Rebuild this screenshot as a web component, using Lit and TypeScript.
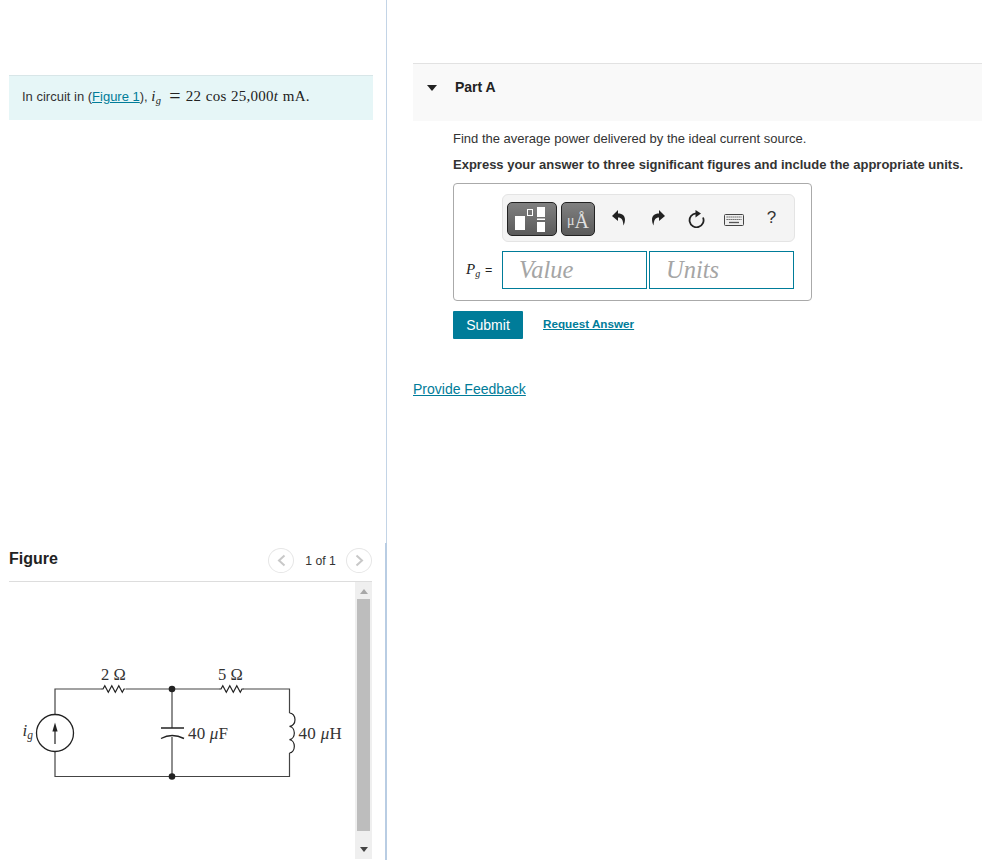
import { LitElement, html, css, svg } from "lit";
import { customElement } from "lit/decorators.js";

const zig = (x: number, y: number) =>
  `M${x} ${y}l2 0l1.800 -3.200l3.500 6.400l3.500 -6.400l3.500 6.400l3.500 -6.400l3.500 6.400l1.700 -3.200l1.500 0`;

@customElement("app-root")
export class AppRoot extends LitElement {
  static styles = css`
    :host { display: block; width: 982px; height: 860px; overflow: hidden; background: #fff;
      font-family: "Liberation Sans", Arial, sans-serif; color: #333; font-size: 13px; }
    .page { display: flex; height: 860px; }
    .left { width: 386px; flex: none; display: flex; flex-direction: column; padding-left: 9px; box-sizing: border-box; }
    .prompt { margin-top: 75px; width: 364px; height: 45px; box-sizing: border-box; background: #e6f6f7;
      border-top: 1px solid #d8e6e8; padding: 0 0 4px 13px; display: flex; align-items: center; font-size: 13px; color: #333; white-space: nowrap; }
    a { color: #007c99; text-decoration: underline; }
    .math { font-family: "Liberation Serif", serif; font-size: 15px; color: #222; letter-spacing: 0.25px; word-spacing: 0.5px; }
    .math i { font-style: italic; }
    .math sub { font-size: 10.5px; line-height: 0; vertical-align: -3px; font-style: italic; }
    .math .eq { margin: 0 5px 0 8px; font-size: 20px; line-height: 0; position: relative; top: 2px; }
    .figure { margin-top: 420px; width: 363px; flex: 1; display: flex; flex-direction: column; min-height: 0; }
    .fighead { height: 42px; flex: none; display: flex; align-items: center; border-bottom: 1px solid #ddd; box-sizing: border-box; }
    .fighead h3 { margin: 0; font-size: 16px; font-weight: bold; color: #222; flex: 1; position: relative; top: -2px; }
    .pager { display: flex; align-items: center; font-size: 12.2px; color: #333; }
    .circ { width: 26px; height: 25px; border-radius: 50%; border: 1px solid #e6e6e6; box-sizing: border-box; display: flex; align-items: center; justify-content: center; }
    .count { width: 52px; text-align: center; white-space: nowrap; padding-left: 1px; box-sizing: border-box; }
    .figbody { flex: 1; display: flex; min-height: 0; }
    .canvas { width: 346px; flex: none; }
    .canvas svg { display: block; }
    .sb { width: 17px; flex: none; background: #efefef; display: flex; flex-direction: column; align-items: center; margin-bottom: 1px; }
    .sb .btn { flex: none; display: flex; justify-content: center; width: 100%; box-sizing: border-box; }
    .sb .btn svg { display: block; }
    .sb .up { height: 17px; padding-top: 7px; }
    .sb .down { height: 28px; padding-top: 16px; }
    .sb .thumb { flex: 1; width: 13px; background: #bdbdbd; }
    .divider { width: 2px; flex: none; display: flex; flex-direction: column; }
    .d1 { height: 543px; width: 1px; background: #c3d4e6; }
    .d2 { flex: 1; width: 2px; background: #b9cde3; margin-left: -1px; }
    .right { flex: 1; padding-left: 25px; padding-top: 63px; min-width: 0; }
    .parthead { height: 58px; background: #f9f9f9; border-top: 1px solid #e2e2e2; box-sizing: border-box; display: flex; padding-left: 14px; padding-top: 15px; }
    .tri { width: 0; height: 0; border-left: 5.5px solid transparent; border-right: 5.5px solid transparent; border-top: 6px solid #222; margin-top: 6px; }
    .parthead b { margin-left: 18px; font-size: 14px; color: #222; line-height: 16px; }
    .body { padding-left: 40px; }
    .q { margin: 10px 0 0; font-size: 13px; line-height: 16px; color: #333; }
    .ins { margin: 10px 0 0; font-size: 13px; line-height: 16px; font-weight: bold; color: #333; white-space: nowrap; }
    .answer { margin-top: 10px; width: 359px; height: 118px; box-sizing: border-box; border: 1px solid #aaa; border-radius: 4px; padding: 10px 17px 0 12px; }
    .toolbar { margin-left: 36px; height: 48px; width: 293px; box-sizing: border-box; background: #f4f4f4; border: 1px solid #e4e4e4; border-radius: 6px; display: flex; align-items: center; padding-left: 4px; }
    .tb { height: 34px; flex: none; box-sizing: border-box; border: 1px solid #222; border-radius: 5px; background: linear-gradient(#808080, #5a5a5a); display: flex; align-items: center; justify-content: center; position: relative; top: 1px; }
    .tb.t1 { width: 50px; }
    .tb.t2 { width: 34px; margin-left: 4px; color: #e0e0e0; font-family: "Liberation Serif", serif; font-size: 14px; padding-top: 3px; }
    .tb.t2 span { font-size: 20px; line-height: 0; }
    .ic { display: flex; align-items: center; justify-content: center; flex: none; height: 34px; }
    .i-undo { width: 48px; }
    .i-redo { width: 30px; }
    .i-reload { width: 46px; }
    .i-keys { width: 30px; }
    .i-help { width: 45px; font-size: 17px; color: #333; }
    .i-reload svg { position: relative; top: 1px; }
    .i-keys svg { position: relative; top: 2px; }
    .row { display: flex; align-items: center; margin-top: 9px; }
    .lbl { width: 36px; flex: none; font-family: "Liberation Serif", serif; font-size: 15px; white-space: nowrap; color: #222; box-sizing: border-box; padding-bottom: 1px; }
    .lbl i { font-style: italic; }
    .lbl sub { font-size: 10px; line-height: 0; vertical-align: -3px; font-style: italic; }
    .lbl span { font-family: "Liberation Sans", sans-serif; font-size: 12.5px; margin-left: 1px; }
    .field { width: 145px; height: 38px; box-sizing: border-box; border: 1px solid #007c99; display: flex; align-items: center; padding-left: 16px; font-family: "Liberation Serif", serif; font-style: italic; font-size: 24.500px; color: #a5a5a5; }
    .field + .field { margin-left: 2px; }
    .actions { display: flex; align-items: center; margin-top: 10px; }
    .submit { width: 70px; height: 28px; background: #007c99; color: #fff; font-size: 14px; display: flex; align-items: center; justify-content: center; border-radius: 1px; }
    .req { margin-left: 20px; font-size: 11.7px; font-weight: bold; position: relative; top: -2px; }
    .fb { display: inline-block; margin-top: 42px; font-size: 14px; line-height: 16px; }
  `;

  private circuit() {
    return svg`<svg width="346" height="278" viewBox="9 582 346 278" xmlns="http://www.w3.org/2000/svg">
      <g fill="none" stroke="#444" stroke-width="1.2">
        <path d="M55 714.500V689H101M126 689H219M243 689H289.500V713M289.500 753V776.500H55V751.500"/>
        <path d="${zig(101, 689)}" stroke="#222"/>
        <path d="${zig(219, 689)}" stroke="#222"/>
        <circle cx="55" cy="733" r="18.500" stroke="#222" stroke-width="1.300"/>
        <path d="M55 744V727" stroke="#222"/>
        <path d="M172 689V728M172 737V776.500"/>
        <path d="M161 728H184" stroke-width="1.500" stroke="#222"/>
        <path d="M161 738.500Q172 732.500 184 738.500" stroke-width="1.400" stroke="#222"/>
        <path d="M289.500 713a5.500 6.700 0 0 1 0 13.400a5.500 6.700 0 0 1 0 13.300a5.500 6.700 0 0 1 0 13.300" stroke="#222"/>
      </g>
      <path d="M55 722.500l-2.600 9h5.200z" fill="#222"/>
      <circle cx="172" cy="689" r="3.300" fill="#222"/>
      <circle cx="172" cy="776.500" r="3.300" fill="#222"/>
      <g font-family="Liberation Serif, serif" font-size="16.500" fill="#333">
        <text x="101" y="680">2 Ω</text>
        <text x="218" y="680">5 Ω</text>
        <text x="188" y="739" font-size="17" letter-spacing="0.2">40 <tspan font-style="italic">μ</tspan>F</text>
        <text x="298.500" y="739" font-size="17" letter-spacing="0.3">40 <tspan font-style="italic">μ</tspan>H</text>
        <text x="22.500" y="736" font-size="17" font-style="italic">i<tspan font-size="11.500" dy="3">g</tspan></text>
      </g>
    </svg>`;
  }

  render() {
    return html`<div class="page">
      <div class="left">
        <div class="prompt"><span>In circuit in (<a>Figure 1</a>),&nbsp;</span><span class="math"><i>i</i><sub>g</sub><span class="eq">=</span>22 cos 25,000<i>t</i> mA.</span></div>
        <div class="figure">
          <div class="fighead"><h3>Figure</h3>
            <div class="pager">
              <span class="circ"><svg width="9" height="13" viewBox="0 0 9 13"><path d="M7.500 1.500L2 6.500L7.500 11.500" fill="none" stroke="#c8c8c8" stroke-width="2"/></svg></span>
              <span class="count">1 of 1</span>
              <span class="circ"><svg width="9" height="13" viewBox="0 0 9 13"><path d="M1.500 1.500L7 6.500L1.500 11.500" fill="none" stroke="#c8c8c8" stroke-width="2"/></svg></span>
            </div>
          </div>
          <div class="figbody">
            <div class="canvas">${this.circuit()}</div>
            <div class="sb">
              <div class="btn up"><svg width="8" height="5"><path d="M0 5L4 0L8 5z" fill="#a8a8a8"/></svg></div>
              <div class="thumb"></div>
              <div class="btn down"><svg width="8" height="5"><path d="M0 0L8 0L4 5z" fill="#444"/></svg></div>
            </div>
          </div>
        </div>
      </div>
      <div class="divider"><div class="d1"></div><div class="d2"></div></div>
      <div class="right">
        <div class="parthead"><div class="tri"></div><b>Part A</b></div>
        <div class="body">
          <p class="q">Find the average power delivered by the ideal current source.</p>
          <p class="ins">Express your answer to three significant figures and include the appropriate units.</p>
          <div class="answer">
            <div class="toolbar">
              <div class="tb t1"><svg width="38" height="25" viewBox="0 0 38 25">
                <rect x="2" y="9" width="10" height="14" fill="#fff"/>
                <rect x="14.500" y="2.500" width="5" height="6" fill="none" stroke="#fff"/>
                <rect x="24" y="0" width="8" height="10" fill="#fff"/>
                <rect x="24" y="11.500" width="8" height="1.500" fill="#fff"/>
                <rect x="24" y="15" width="8" height="10" fill="#fff"/></svg></div>
              <div class="tb t2">μ<span>Å</span></div>
              <div class="ic i-undo"><svg width="14" height="16" viewBox="0 0 14 16"><path d="M6 0L0 6L6 11V7.500C9.500 7.500 11 9.500 11.500 15.500C14.500 9 13 3.500 6 3.500z" fill="#222"/></svg></div>
              <div class="ic i-redo"><svg width="14" height="16" viewBox="0 0 14 16"><path d="M8 0L14 6L8 11V7.500C4.500 7.500 3 9.500 2.500 15.500C-0.500 9 1 3.500 8 3.500z" fill="#222"/></svg></div>
              <div class="ic i-reload"><svg width="17" height="18" viewBox="0 0 17 18"><path d="M15 7.500A7 7 0 1 1 8 3.300" fill="none" stroke="#222" stroke-width="1.800"/><path d="M7.500 0L13 3.500L7.500 7.500z" fill="#222"/></svg></div>
              <div class="ic i-keys"><svg width="20" height="12" viewBox="0 0 20 12"><rect x="0.500" y="0.500" width="19" height="11" rx="1" fill="#eee" stroke="#444"/><path d="M2.500 3H17.500M2.500 5.500H17.500" stroke="#555" stroke-width="1.200" stroke-dasharray="1.300 .700"/><path d="M5 8.500H15" stroke="#555" stroke-width="1.300"/></svg></div>
              <div class="ic i-help">?</div>
            </div>
            <div class="row">
              <div class="lbl"><i>P</i><sub>g</sub> <span>=</span></div>
              <div class="field">Value</div>
              <div class="field">Units</div>
            </div>
          </div>
          <div class="actions"><div class="submit">Submit</div><a class="req">Request Answer</a></div>
        </div>
        <a class="fb">Provide Feedback</a>
      </div>
    </div>`;
  }
}
